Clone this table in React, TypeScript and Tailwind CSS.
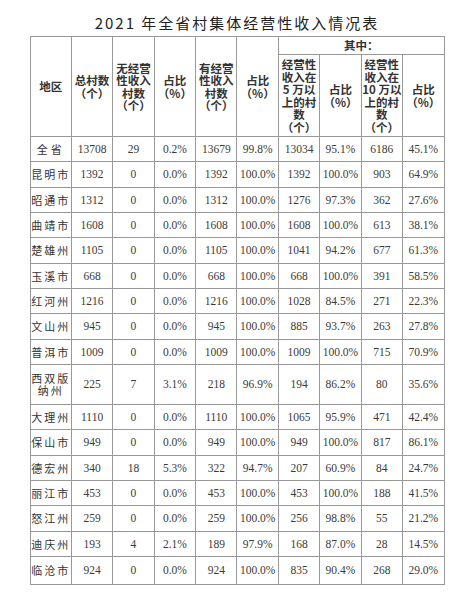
import React from "react";

const rows: [string, string[]][] = [
  ["全省", ["13708", "29", "0.2%", "13679", "99.8%", "13034", "95.1%", "6186", "45.1%"]],
  ["昆明市", ["1392", "0", "0.0%", "1392", "100.0%", "1392", "100.0%", "903", "64.9%"]],
  ["昭通市", ["1312", "0", "0.0%", "1312", "100.0%", "1276", "97.3%", "362", "27.6%"]],
  ["曲靖市", ["1608", "0", "0.0%", "1608", "100.0%", "1608", "100.0%", "613", "38.1%"]],
  ["楚雄州", ["1105", "0", "0.0%", "1105", "100.0%", "1041", "94.2%", "677", "61.3%"]],
  ["玉溪市", ["668", "0", "0.0%", "668", "100.0%", "668", "100.0%", "391", "58.5%"]],
  ["红河州", ["1216", "0", "0.0%", "1216", "100.0%", "1028", "84.5%", "271", "22.3%"]],
  ["文山州", ["945", "0", "0.0%", "945", "100.0%", "885", "93.7%", "263", "27.8%"]],
  ["普洱市", ["1009", "0", "0.0%", "1009", "100.0%", "1009", "100.0%", "715", "70.9%"]],
  ["西双版纳州", ["225", "7", "3.1%", "218", "96.9%", "194", "86.2%", "80", "35.6%"]],
  ["大理州", ["1110", "0", "0.0%", "1110", "100.0%", "1065", "95.9%", "471", "42.4%"]],
  ["保山市", ["949", "0", "0.0%", "949", "100.0%", "949", "100.0%", "817", "86.1%"]],
  ["德宏州", ["340", "18", "5.3%", "322", "94.7%", "207", "60.9%", "84", "24.7%"]],
  ["丽江市", ["453", "0", "0.0%", "453", "100.0%", "453", "100.0%", "188", "41.5%"]],
  ["怒江州", ["259", "0", "0.0%", "259", "100.0%", "256", "98.8%", "55", "21.2%"]],
  ["迪庆州", ["193", "4", "2.1%", "189", "97.9%", "168", "87.0%", "28", "14.5%"]],
  ["临沧市", ["924", "0", "0.0%", "924", "100.0%", "835", "90.4%", "268", "29.0%"]],
];

const th =
  "border border-[#999] p-0 text-center align-middle font-bold text-[11.5px] leading-[12.5px] text-[#333]";
const td =
  "border border-[#999] p-0 text-center align-middle text-[11.5px] leading-[14px] text-[#3a3a3a] [font-family:'Liberation_Serif',serif]";

function Lines({ items }: { items: string[] }) {
  return (
    <>
      {items.map((s, i) => (
        <div key={i} className="whitespace-nowrap">
          {s}
        </div>
      ))}
    </>
  );
}

export default function App() {
  return (
    <div className="w-[474px] h-[609px] bg-white [font-family:'Noto_Sans_CJK_SC','Noto_Sans',sans-serif]">
      <div className="pt-[13px] h-[36px] text-center text-[15px] leading-[20px] text-[#222] tracking-[2px]">
        2021 年全省村集体经营性收入情况表
      </div>
      <table className="mx-auto w-[415px] table-fixed border-collapse">
        <thead>
          <tr className="h-[18px]">
            <th rowSpan={2} className={th}>
              地区
            </th>
            <th rowSpan={2} className={th}>
              <Lines items={["总村数", "（个）"]} />
            </th>
            <th rowSpan={2} className={th}>
              <Lines items={["无经营", "性收入", "村数", "（个）"]} />
            </th>
            <th rowSpan={2} className={th}>
              <Lines items={["占比", "（%）"]} />
            </th>
            <th rowSpan={2} className={th}>
              <Lines items={["有经营", "性收入", "村数", "（个）"]} />
            </th>
            <th rowSpan={2} className={th}>
              <Lines items={["占比", "（%）"]} />
            </th>
            <th colSpan={4} className={th}>
              其中：
            </th>
          </tr>
          <tr className="h-[82px]">
            <th className={th}>
              <Lines items={["经营性", "收入在", "5 万以", "上的村", "数", "（个）"]} />
            </th>
            <th className={th}>
              <Lines items={["占比", "（%）"]} />
            </th>
            <th className={th}>
              <Lines items={["经营性", "收入在", "10 万以", "上的村", "数", "（个）"]} />
            </th>
            <th className={th}>
              <Lines items={["占比", "（%）"]} />
            </th>
          </tr>
        </thead>
        <tbody>
          {rows.map(([name, vals], idx) => {
            const isTall = name === "西双版纳州";
            const isLast = idx === rows.length - 1;
            const h = isTall ? "h-[40px]" : isLast ? "h-[28px]" : "h-[25.33px]";
            return (
              <tr key={name} className={h}>
                <td className="border border-[#999] p-0 text-center align-middle text-[11px] leading-[12.5px] text-[#333] tracking-[2px] [font-family:'Noto_Sans_CJK_SC',sans-serif]">
                  {isTall ? (
                    <>
                      <div>西双版</div>
                      <div>纳州</div>
                    </>
                  ) : name === "全省" ? (
                    <span className="tracking-[3px]">全省</span>
                  ) : (
                    name
                  )}
                </td>
                {vals.map((v, i) => (
                  <td key={i} className={td}>
                    {v}
                  </td>
                ))}
              </tr>
            );
          })}
        </tbody>
      </table>
    </div>
  );
}
